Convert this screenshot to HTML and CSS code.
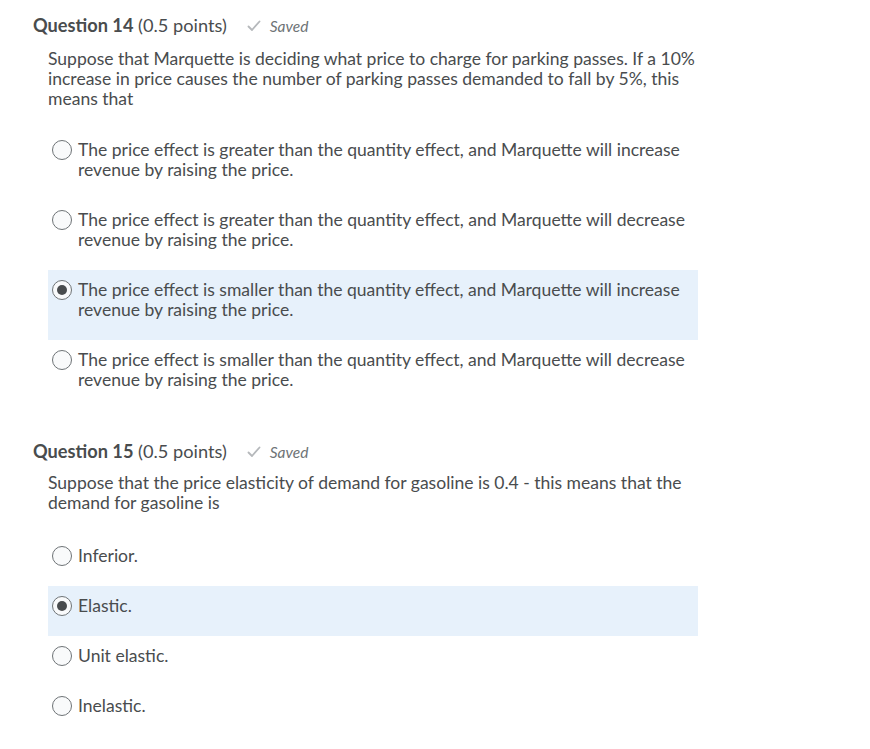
FILE: index.html
```html
<!DOCTYPE html>
<html>
<head>
<meta charset="utf-8">
<link rel="stylesheet" href="styles.css">
</head>
<body>
<div class="page">
  <section class="question">
    <h2 class="q-title"><span class="q-num">Question 14</span> (0.5 points)<span class="saved"><svg class="check" width="14" height="12" viewBox="0 0 14 12"><path d="M1.5 6.5 L5 10 L12.5 1.5" fill="none" stroke="#b5b8bb" stroke-width="1.8" stroke-linecap="round" stroke-linejoin="round"/></svg><em>Saved</em></span></h2>
    <p class="q-text t1">Suppose that Marquette is deciding what price to charge for parking passes. If a 10% increase in price causes the number of parking passes demanded to fall by 5%, this means that</p>
    <div class="options first-gap">
      <label class="opt"><span class="radio"></span><span class="opt-text">The price effect is greater than the quantity effect, and Marquette will increase revenue by raising the price.</span></label>
      <label class="opt"><span class="radio"></span><span class="opt-text">The price effect is greater than the quantity effect, and Marquette will decrease revenue by raising the price.</span></label>
      <label class="opt selected"><span class="radio checked"></span><span class="opt-text">The price effect is smaller than the quantity effect, and Marquette will increase revenue by raising the price.</span></label>
      <label class="opt"><span class="radio"></span><span class="opt-text">The price effect is smaller than the quantity effect, and Marquette will decrease revenue by raising the price.</span></label>
    </div>
  </section>
  <section class="question q2">
    <h2 class="q-title"><span class="q-num">Question 15</span> (0.5 points)<span class="saved"><svg class="check" width="14" height="12" viewBox="0 0 14 12"><path d="M1.5 6.5 L5 10 L12.5 1.5" fill="none" stroke="#b5b8bb" stroke-width="1.8" stroke-linecap="round" stroke-linejoin="round"/></svg><em>Saved</em></span></h2>
    <p class="q-text t2">Suppose that the price elasticity of demand for gasoline is 0.4 - this means that the demand for gasoline is</p>
    <div class="options second-gap">
      <label class="opt"><span class="radio"></span><span class="opt-text">Inferior.</span></label>
      <label class="opt selected"><span class="radio checked"></span><span class="opt-text">Elastic.</span></label>
      <label class="opt"><span class="radio"></span><span class="opt-text">Unit elastic.</span></label>
      <label class="opt"><span class="radio"></span><span class="opt-text">Inelastic.</span></label>
    </div>
  </section>
</div>
</body>
</html>
```

FILE: styles.css
```css
html, body {
  margin: 0;
  padding: 0;
  background: #ffffff;
}
body {
  font-family: Lato, "Open Sans", sans-serif;
  color: #494c4e;
}
.page {
  padding: 14px 0 0 33px;
  width: 680px;
}
.q-title {
  margin: 0;
  font-size: 18.2px;
  font-weight: 400;
  line-height: 22px;
  height: 22px;
  white-space: nowrap;
}
.q-num {
  font-weight: 700;
}
.saved {
  display: inline-block;
  margin-left: 20px;
  font-size: 15.5px;
  color: #6e7376;
}
.check {
  margin-right: 9px;
  vertical-align: 0;
}
.saved em {
  font-style: italic;
}
.q-text {
  margin: 0 0 0 15px;
  width: 652px;
  font-size: 17.55px;
  line-height: 20px;
}
.t1 {
  margin-top: 13px;
}
.t2 {
  margin-top: 11px;
}
.options {
  margin-left: 15px;
  width: 650px;
  display: flex;
  flex-direction: column;
}
.first-gap {
  margin-top: 21px;
}
.second-gap {
  margin-top: 23px;
}
.opt {
  display: flex;
  align-items: flex-start;
  padding: 10px 8px 20px 4px;
  font-size: 17.55px;
  line-height: 20px;
}
.opt.selected {
  background: #e7f1fb;
}
.radio {
  flex: none;
  box-sizing: border-box;
  width: 20px;
  height: 20px;
  margin: 0 6px 0 0;
  border: 1px solid #6e7376;
  border-radius: 50%;
  background: #f9fafb;
  display: flex;
  align-items: center;
  justify-content: center;
}
.radio.checked::after {
  content: "";
  width: 10px;
  height: 10px;
  border-radius: 50%;
  background: #494c4e;
}
.opt-text {
  flex: 1;
}
.q2 {
  margin-top: 30px;
}
```
